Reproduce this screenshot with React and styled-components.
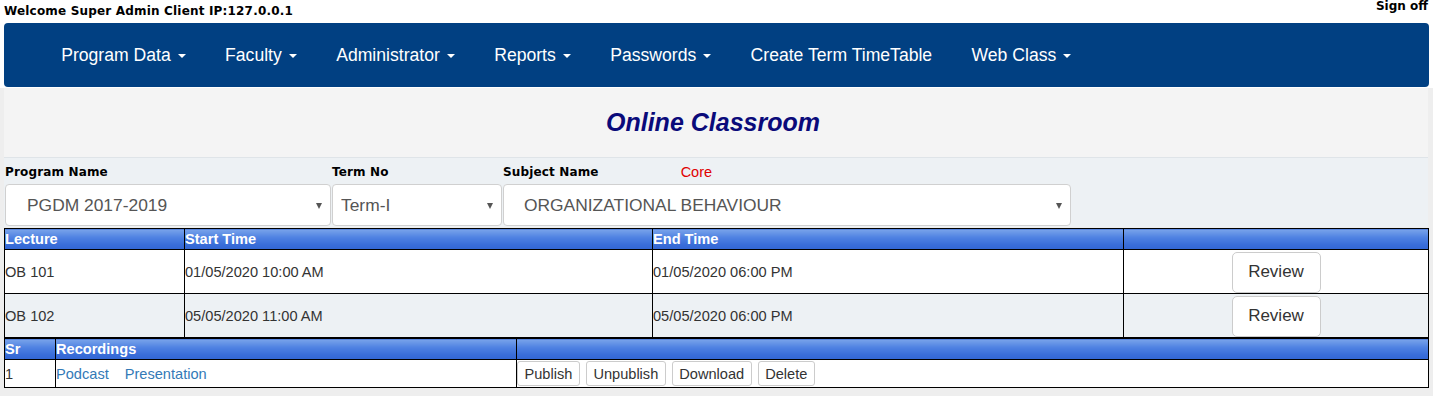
import React from "react";
import styled, { createGlobalStyle } from "styled-components";

const Global = createGlobalStyle`
  html, body { margin: 0; padding: 0; background: #ffffff; }
  body { font-family: "Liberation Sans", Arial, sans-serif; }
  * { box-sizing: border-box; }
`;

const Page = styled.div`
  width: 1433px;
  min-height: 396px;
  background: linear-gradient(#fff 0, #fff 88px, #eeeeee 88px);
`;

const TopBar = styled.div`
  display: flex;
  justify-content: space-between;
  align-items: flex-start;
  height: 23px;
  padding: 0 5px 0 4px;
`;

const Welcome = styled.span`
  font-family: "DejaVu Sans", Verdana, sans-serif;
  font-weight: bold;
  font-size: 12px;
  letter-spacing: 0.18px;
  line-height: 14px;
  margin-top: 4px;
  color: #000;
`;

const SignOff = styled.a`
  font-family: "DejaVu Sans", Verdana, sans-serif;
  font-weight: bold;
  font-size: 12px;
  line-height: 13px;
  color: #000;
  text-decoration: none;
`;

const Navbar = styled.nav`
  margin: 0 4px;
  height: 64px;
  background: #014082;
  border-radius: 4px;
  display: flex;
  align-items: center;
  padding-left: 37.5px;
`;

const NavItem = styled.a`
  color: #fff;
  font-size: 17.6px;
  padding: 0 19.7px;
  text-decoration: none;
  display: flex;
  align-items: center;
  white-space: nowrap;
`;

const Caret = styled.span`
  display: inline-block;
  width: 0;
  height: 0;
  margin-left: 7px;
  border-top: 4px solid #fff;
  border-left: 4px solid transparent;
  border-right: 4px solid transparent;
  margin-top: 2px;
`;

const Main = styled.div`
  padding: 1px 5px 8px 4px;
`;

const TitlePanel = styled.div`
  background: #f4f4f4;
  height: 69px;
  display: flex;
  align-items: center;
  justify-content: center;
  padding-right: 6px;
`;

const Title = styled.h1`
  margin: 0;
  margin-bottom: 1px;
  font-size: 25px;
  font-style: italic;
  font-weight: bold;
  color: #0a0a7a;
`;

const FilterPanel = styled.div`
  background: #edf1f4;
  border-top: 1px solid #dfe4e8;
  height: 70px;
  display: flex;
  padding-left: 1px;
`;

const Field = styled.div`
  width: ${(p) => p.$w}px;
  margin-right: 1px;
  display: flex;
  flex-direction: column;
`;

const Label = styled.div`
  font-family: "DejaVu Sans", Verdana, sans-serif;
  font-weight: bold;
  font-size: 12px;
  letter-spacing: 0.15px;
  line-height: 14px;
  color: #000;
  height: 26px;
  padding-top: 7px;
  display: flex;
`;

const CoreTag = styled.span`
  font-family: "Liberation Sans", Arial, sans-serif;
  font-weight: normal;
  font-size: 14.5px;
  letter-spacing: 0;
  line-height: 14px;
  color: #e00000;
  margin-left: ${(p) => p.$ml}px;
`;

const SelectWrap = styled.div`
  position: relative;
  height: 42px;
  &::after {
    content: "";
    position: absolute;
    right: 9px;
    top: 19px;
    border-top: 6px solid #555;
    border-left: 3px solid transparent;
    border-right: 3px solid transparent;
    pointer-events: none;
  }
`;

const Select = styled.select`
  appearance: none;
  -webkit-appearance: none;
  width: 100%;
  height: 42px;
  border: 1px solid #d0d0d0;
  border-radius: 4px;
  background: #fff;
  color: #555;
  font-family: "Liberation Sans", Arial, sans-serif;
  font-size: 17.4px;
  padding: 0 24px 0 ${(p) => p.$pl}px;
  outline: none;
`;

const Table = styled.table`
  width: 1425px;
  border-collapse: collapse;
  border: 1px solid #000;
  margin-top: ${(p) => p.$mt || 0}px;
  table-layout: fixed;
  font-size: 14.6px;
`;

const Th = styled.th`
  height: 21px;
  padding: 0;
  text-align: left;
  color: #fff;
  font-weight: bold;
  font-size: 14.6px;
  border: 1px solid #000;
  background: linear-gradient(#79a3ea 0%, #4f82e2 40%, #3a6ed9 75%, #3266d4 100%);
  width: ${(p) => (p.$w ? p.$w + "px" : "auto")};
`;

const Tr = styled.tr`
  background: ${(p) => (p.$alt ? "#edf1f4" : "#ffffff")};
`;

const Td = styled.td`
  height: ${(p) => p.$h || 44}px;
  padding: 0;
  border: 1px solid #000;
  color: #333;
  font-size: 14.6px;
  text-align: ${(p) => (p.$center ? "center" : "left")};
  vertical-align: middle;
`;

const ReviewButton = styled.button`
  font-family: "Liberation Sans", Arial, sans-serif;
  font-size: 17px;
  color: #333;
  background: #fff;
  border: 1px solid #ccc;
  border-radius: 5px;
  height: 41px;
  width: 89px;
  padding: 0;
  margin-top: 1px;
`;

const LinkText = styled.a`
  color: #337ab7;
  text-decoration: none;
  margin-right: ${(p) => p.$mr || 0}px;
`;

const ActionRow = styled.div`
  display: flex;
  gap: 6px;
  align-items: center;
`;

const SmallButton = styled.button`
  font-family: "Liberation Sans", Arial, sans-serif;
  font-size: 14.6px;
  color: #333;
  background: #fff;
  border: 1px solid #ccc;
  border-radius: 3px;
  height: 25px;
  padding: 0 6.5px;
`;

const navItems = [
  { label: "Program Data", caret: true },
  { label: "Faculty", caret: true },
  { label: "Administrator", caret: true },
  { label: "Reports", caret: true },
  { label: "Passwords", caret: true },
  { label: "Create Term TimeTable", caret: false },
  { label: "Web Class", caret: true },
];

const lectures = [
  { name: "OB 101", start: "01/05/2020 10:00 AM", end: "01/05/2020 06:00 PM" },
  { name: "OB 102", start: "05/05/2020 11:00 AM", end: "05/05/2020 06:00 PM" },
];

export default function App() {
  return (
    <>
      <Global />
      <Page>
        <TopBar>
          <Welcome>Welcome Super Admin Client IP:127.0.0.1</Welcome>
          <SignOff href="#">Sign off</SignOff>
        </TopBar>
        <Navbar>
          {navItems.map((n) => (
            <NavItem key={n.label} href="#">
              {n.label}
              {n.caret && <Caret />}
            </NavItem>
          ))}
        </Navbar>
        <Main>
          <TitlePanel>
            <Title>Online Classroom</Title>
          </TitlePanel>
          <FilterPanel>
            <Field $w={326}>
              <Label>Program Name</Label>
              <SelectWrap>
                <Select $pl={21} defaultValue="p">
                  <option value="p">PGDM 2017-2019</option>
                </Select>
              </SelectWrap>
            </Field>
            <Field $w={170}>
              <Label>Term No</Label>
              <SelectWrap>
                <Select $pl={8} defaultValue="t">
                  <option value="t">Term-I</option>
                </Select>
              </SelectWrap>
            </Field>
            <Field $w={568}>
              <Label>
                Subject Name<CoreTag $ml={82}>Core</CoreTag>
              </Label>
              <SelectWrap>
                <Select $pl={20} defaultValue="s">
                  <option value="s">ORGANIZATIONAL BEHAVIOUR</option>
                </Select>
              </SelectWrap>
            </Field>
          </FilterPanel>
          <Table $mt={1}>
            <thead>
              <tr>
                <Th $w={180}>Lecture</Th>
                <Th $w={468}>Start Time</Th>
                <Th $w={471}>End Time</Th>
                <Th />
              </tr>
            </thead>
            <tbody>
              {lectures.map((l, i) => (
                <Tr key={l.name} $alt={i % 2 === 1}>
                  <Td>{l.name}</Td>
                  <Td>{l.start}</Td>
                  <Td>{l.end}</Td>
                  <Td $center>
                    <ReviewButton>Review</ReviewButton>
                  </Td>
                </Tr>
              ))}
            </tbody>
          </Table>
          <Table>
            <thead>
              <tr>
                <Th $w={51}>Sr</Th>
                <Th $w={461}>Recordings</Th>
                <Th />
              </tr>
            </thead>
            <tbody>
              <Tr>
                <Td $h={28}>1</Td>
                <Td $h={28}>
                  <LinkText href="#" $mr={16}>Podcast</LinkText>
                  <LinkText href="#">Presentation</LinkText>
                </Td>
                <Td $h={28}>
                  <ActionRow>
                    <SmallButton>Publish</SmallButton>
                    <SmallButton>Unpublish</SmallButton>
                    <SmallButton>Download</SmallButton>
                    <SmallButton>Delete</SmallButton>
                  </ActionRow>
                </Td>
              </Tr>
            </tbody>
          </Table>
        </Main>
      </Page>
    </>
  );
}
